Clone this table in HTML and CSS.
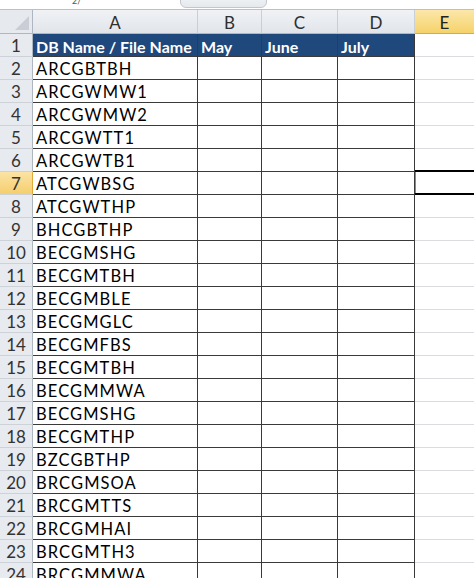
FILE: index.html
```html
<!DOCTYPE html>
<html>
<head>
<meta charset="utf-8">
<link rel="stylesheet" href="styles.css">
</head>
<body>
<div class="topbar">
  <span class="formula-glyph">2/</span>
  <div class="tab"></div>
</div>
<div class="sheet">
  <div class="row colhead">
    <div class="corner"><svg width="14" height="14" viewBox="0 0 14 14"><polygon points="14,0 14,14 0,14" fill="#c9ced6"/></svg></div>
    <div class="ch">A</div>
    <div class="ch">B</div>
    <div class="ch">C</div>
    <div class="ch">D</div>
    <div class="ch sel">E</div>
  </div>
  <div class="row head">
    <div class="rh">1</div>
    <div class="c h">DB Name / File Name</div>
    <div class="c h">May</div>
    <div class="c h">June</div>
    <div class="c h">July</div>
    <div class="c e"></div>
  </div>
  <div class="row"><div class="rh">2</div><div class="c">ARCGBTBH</div><div class="c"></div><div class="c"></div><div class="c"></div><div class="c e"></div></div>
  <div class="row"><div class="rh">3</div><div class="c">ARCGWMW1</div><div class="c"></div><div class="c"></div><div class="c"></div><div class="c e"></div></div>
  <div class="row"><div class="rh">4</div><div class="c">ARCGWMW2</div><div class="c"></div><div class="c"></div><div class="c"></div><div class="c e"></div></div>
  <div class="row"><div class="rh">5</div><div class="c">ARCGWTT1</div><div class="c"></div><div class="c"></div><div class="c"></div><div class="c e"></div></div>
  <div class="row"><div class="rh">6</div><div class="c">ARCGWTB1</div><div class="c"></div><div class="c"></div><div class="c"></div><div class="c e pre"></div></div>
  <div class="row"><div class="rh sel">7</div><div class="c">ATCGWBSG</div><div class="c"></div><div class="c"></div><div class="c"></div><div class="c e active"></div></div>
  <div class="row"><div class="rh">8</div><div class="c">ATCGWTHP</div><div class="c"></div><div class="c"></div><div class="c"></div><div class="c e"></div></div>
  <div class="row"><div class="rh">9</div><div class="c">BHCGBTHP</div><div class="c"></div><div class="c"></div><div class="c"></div><div class="c e"></div></div>
  <div class="row"><div class="rh">10</div><div class="c">BECGMSHG</div><div class="c"></div><div class="c"></div><div class="c"></div><div class="c e"></div></div>
  <div class="row"><div class="rh">11</div><div class="c">BECGMTBH</div><div class="c"></div><div class="c"></div><div class="c"></div><div class="c e"></div></div>
  <div class="row"><div class="rh">12</div><div class="c">BECGMBLE</div><div class="c"></div><div class="c"></div><div class="c"></div><div class="c e"></div></div>
  <div class="row"><div class="rh">13</div><div class="c">BECGMGLC</div><div class="c"></div><div class="c"></div><div class="c"></div><div class="c e"></div></div>
  <div class="row"><div class="rh">14</div><div class="c">BECGMFBS</div><div class="c"></div><div class="c"></div><div class="c"></div><div class="c e"></div></div>
  <div class="row"><div class="rh">15</div><div class="c">BECGMTBH</div><div class="c"></div><div class="c"></div><div class="c"></div><div class="c e"></div></div>
  <div class="row"><div class="rh">16</div><div class="c">BECGMMWA</div><div class="c"></div><div class="c"></div><div class="c"></div><div class="c e"></div></div>
  <div class="row"><div class="rh">17</div><div class="c">BECGMSHG</div><div class="c"></div><div class="c"></div><div class="c"></div><div class="c e"></div></div>
  <div class="row"><div class="rh">18</div><div class="c">BECGMTHP</div><div class="c"></div><div class="c"></div><div class="c"></div><div class="c e"></div></div>
  <div class="row"><div class="rh">19</div><div class="c">BZCGBTHP</div><div class="c"></div><div class="c"></div><div class="c"></div><div class="c e"></div></div>
  <div class="row"><div class="rh">20</div><div class="c">BRCGMSOA</div><div class="c"></div><div class="c"></div><div class="c"></div><div class="c e"></div></div>
  <div class="row"><div class="rh">21</div><div class="c">BRCGMTTS</div><div class="c"></div><div class="c"></div><div class="c"></div><div class="c e"></div></div>
  <div class="row"><div class="rh">22</div><div class="c">BRCGMHAI</div><div class="c"></div><div class="c"></div><div class="c"></div><div class="c e"></div></div>
  <div class="row"><div class="rh">23</div><div class="c">BRCGMTH3</div><div class="c"></div><div class="c"></div><div class="c"></div><div class="c e"></div></div>
  <div class="row"><div class="rh">24</div><div class="c">BRCGMMWA</div><div class="c"></div><div class="c"></div><div class="c"></div><div class="c e"></div></div>
</div>
</body>
</html>
```
FILE: styles.css
```css
html, body {
  margin: 0;
  padding: 0;
  background: #ffffff;
  overflow: hidden;
}
body {
  font-family: Lato, "Open Sans", "Liberation Sans", sans-serif;
  width: 474px;
  height: 578px;
}
.topbar {
  position: relative;
  height: 9px;
  border-bottom: 1px solid #b9c0c9;
  background: #ffffff;
  overflow: hidden;
}
.formula-glyph {
  position: absolute;
  left: 72px;
  top: -4px;
  font-size: 9px;
  line-height: 9px;
  color: #555;
}
.tab {
  position: absolute;
  left: 180px;
  top: -8px;
  width: 85px;
  height: 14px;
  border: 1px solid #c2c7ce;
  border-radius: 6px;
  background: linear-gradient(#f4f6f8, #e6e9ed);
}
.sheet {
  display: flex;
  flex-direction: column;
}
.row {
  display: grid;
  grid-template-columns: 33px 165px 64px 76px 77px 59px;
  height: 23px;
}
.row > div {
  box-sizing: border-box;
  height: 23px;
}
.colhead {
  height: 24px;
}
.colhead > div {
  height: 24px;
  background: linear-gradient(#f0f2f5, #e1e5ea);
  border-right: 1px solid #c9cfd7;
  border-bottom: 1px solid #aeb6c0;
  color: #2f2f2f;
  font-size: 17px;
  display: flex;
  align-items: center;
  justify-content: center;
  padding-top: 1px;
}
.colhead .corner {
  background: #e6e9ee;
  border-right: 1px solid #aeb6c0;
  justify-content: flex-end;
  align-items: flex-end;
  padding: 0 3px 3px 0;
}
.colhead .ch.sel {
  background: linear-gradient(#fbe7a9, #f6d26c);
  border-bottom: 1px solid #e1a93a;
  border-right: none;
  color: #222;
}
.rh {
  background: #e7eaef;
  border-right: 1px solid #aeb6c0;
  border-bottom: 1px solid #cdd2d9;
  color: #333;
  font-size: 17px;
  display: flex;
  align-items: center;
  justify-content: center;
  padding-top: 1px;
}
.rh.sel {
  background: linear-gradient(#fbe3a4, #f5cf6e);
  border-right: 1px solid #e1a93a;
}
.c {
  border-right: 1px solid #3a3a3a;
  border-bottom: 1px solid #3a3a3a;
  font-size: 16.5px;
  letter-spacing: 1.1px;
  color: #000;
  padding: 2px 0 0 3px;
  white-space: nowrap;
  overflow: hidden;
  display: flex;
  align-items: center;
}
.c.h {
  background: #1f487c;
  color: #ffffff;
  font-weight: bold;
  font-size: 16px;
  letter-spacing: 0;
}
.c.e {
  border-right: none;
  border-bottom: 1px solid #dadcdf;
  background: #fff;
}
.c.pre {
  border-bottom: 2px solid #000;
}
.c.active {
  border-bottom: 2px solid #000;
  box-shadow: inset 1px 0 0 #8a8a8a;
}
```
